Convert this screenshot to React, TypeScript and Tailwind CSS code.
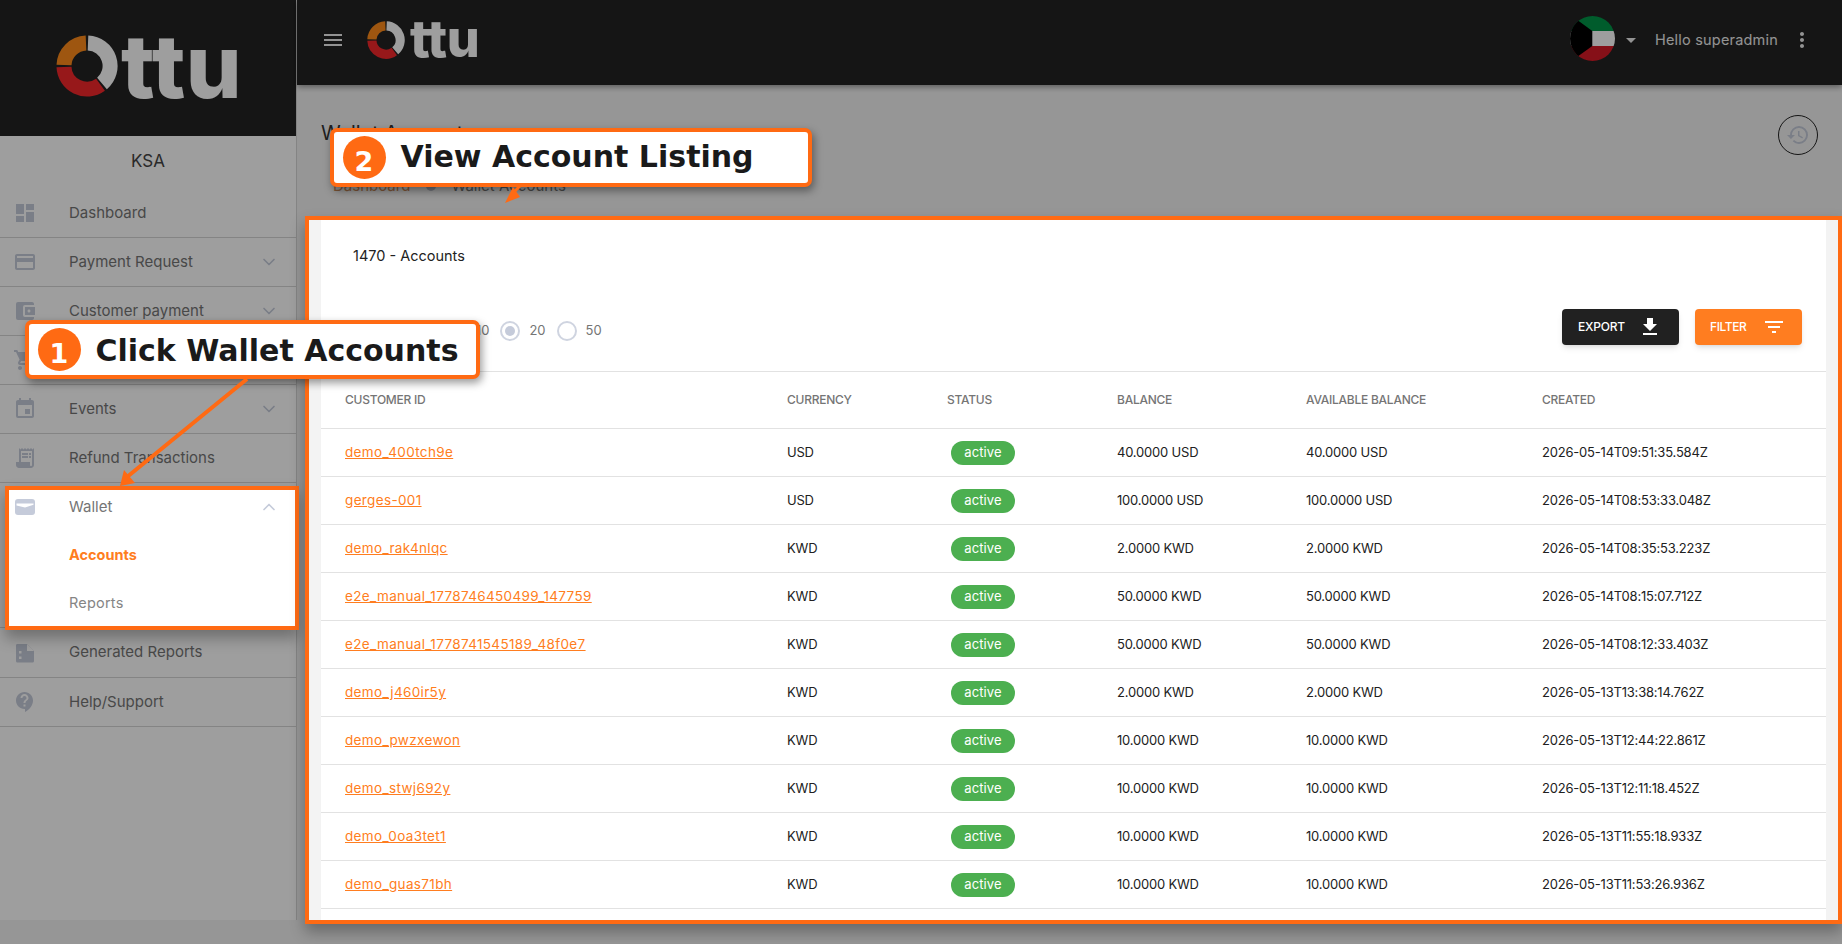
import React from 'react';
import { ChevronDown, ChevronUp } from 'lucide-react';
import {
  MdDashboard,
  MdCreditCard,
  MdAccountBalanceWallet,
  MdShoppingCart,
  MdEvent,
  MdReceiptLong,
  MdContactSupport,
  MdHistory,
  MdFileDownload,
  MdFilterList,
  MdMenu,
  MdMoreVert,
  MdArrowDropDown,
} from 'react-icons/md';

const accounts = [
  ['demo_400tch9e', 'USD', '40.0000 USD', '2026-05-14T09:51:35.584Z'],
  ['gerges-001', 'USD', '100.0000 USD', '2026-05-14T08:53:33.048Z'],
  ['demo_rak4nlqc', 'KWD', '2.0000 KWD', '2026-05-14T08:35:53.223Z'],
  ['e2e_manual_1778746450499_147759', 'KWD', '50.0000 KWD', '2026-05-14T08:15:07.712Z'],
  ['e2e_manual_1778741545189_48f0e7', 'KWD', '50.0000 KWD', '2026-05-14T08:12:33.403Z'],
  ['demo_j460ir5y', 'KWD', '2.0000 KWD', '2026-05-13T13:38:14.762Z'],
  ['demo_pwzxewon', 'KWD', '10.0000 KWD', '2026-05-13T12:44:22.861Z'],
  ['demo_stwj692y', 'KWD', '10.0000 KWD', '2026-05-13T12:11:18.452Z'],
  ['demo_0oa3tet1', 'KWD', '10.0000 KWD', '2026-05-13T11:55:18.933Z'],
  ['demo_guas71bh', 'KWD', '10.0000 KWD', '2026-05-13T11:53:26.936Z'],
];

function LogoRing({ className }: { className: string }) {
  return (
    <svg viewBox="0 0 62 62" className={className} fill="none" strokeWidth="15">
      <path d="M8 30 A23 23 0 0 1 30 8" stroke="#ff8c1a" />
      <path d="M32 8 A23 23 0 0 1 46 48.5" stroke="#ffffff" />
      <path d="M44.5 49.7 A23 23 0 0 1 8 32" stroke="#f4272b" />
    </svg>
  );
}

function WalletIcon() {
  return (
    <svg viewBox="0 0 24 24" className="w-6 h-6 shrink-0" fill="#c5cbda">
      <path d="M5 4h14a3 3 0 0 1 3 3v10a3 3 0 0 1-3 3H5a3 3 0 0 1-3-3V7a3 3 0 0 1 3-3z" />
      <path d="M3.5 8.5h17v1.2L12 12.5 3.5 10.6z" fill="#ffffff" />
    </svg>
  );
}

function ReportIcon() {
  return (
    <svg viewBox="0 0 24 24" className="w-6 h-6 shrink-0" fill="#c5cbda">
      <path d="M4 3h10l7 7v10a1.5 1.5 0 0 1-1.5 1.5h-15A1.5 1.5 0 0 1 3 20V4.500A1.500 1.500 0 0 1 4 3z" />
      <path d="M14 3v7h7z" fill="#ffffff" />
      <rect x="6" y="10" width="2.500" height="2.500" fill="#ffffff" />
      <rect x="6" y="15.500" width="2.500" height="2.500" fill="#ffffff" />
    </svg>
  );
}

function NavRow({ label, icon, chevron }: { label: string; icon: React.ReactNode; chevron?: boolean }) {
  return (
    <div className="h-[49px] border-b border-[#d6d6d6] flex items-center pl-[13px] pr-[17px]">
      {icon}
      <span className="ml-[32px] flex-1 text-[15px] text-[#757575]">{label}</span>
      {chevron && <ChevronDown className="w-5 h-5 text-[#c5cbda]" strokeWidth={2} />}
    </div>
  );
}

function Radio({ label, checked }: { label: string; checked?: boolean }) {
  return (
    <div className="flex items-center gap-[9px] mr-[11px]">
      <span className="w-5 h-5 rounded-full border-2 border-[#cfd4e0] flex items-center justify-center">
        {checked && <span className="w-[10px] h-[10px] rounded-full bg-[#c5cbda]" />}
      </span>
      <span className="text-[13px] text-[#757575]">{label}</span>
    </div>
  );
}

function Callout({ n, text, className, textClass }: { n: number; text: string; className: string; textClass: string }) {
  return (
    <div
      className={`absolute z-30 h-[59px] bg-white border-[4px] border-[#ff6a13] rounded-[7px] shadow-[2px_4px_8px_rgba(0,0,0,0.4)] flex items-center pl-[8.5px] ${className}`}
    >
      <span className="w-[43px] h-[43px] rounded-full bg-[#ff6a13] text-white text-[27px] font-bold flex items-center justify-center pt-[7px] leading-none">
        {n}
      </span>
      <span className={`ml-[15px] text-[30px] font-bold leading-none text-[#1a1a1a] whitespace-nowrap ${textClass}`}>
        {text}
      </span>
    </div>
  );
}

export default function App() {
  return (
    <div className="relative h-[944px] w-[1842px] overflow-hidden bg-[#f3f3f3] flex font-['Inter',sans-serif]">
      {/* Sidebar */}
      <aside className="w-[297px] h-[920px] shrink-0 bg-white border-r border-[#d6d6d6]">
        <div className="h-[136px] bg-[#232323] flex items-start pl-[56px] pt-[35px]">
          <LogoRing className="w-[62px] h-[62px]" />
          <span className="ml-[3px] -mt-[13px] text-[88px] leading-[88px] font-extrabold text-white tracking-[0.5px]">ttu</span>
        </div>
        <div className="h-[53px] pb-[2px] flex items-center justify-center text-[17px] text-[#444]">KSA</div>
        <NavRow label="Dashboard" icon={<MdDashboard className="w-6 h-6 text-[#c5cbda]" />} />
        <NavRow label="Payment Request" chevron icon={<MdCreditCard className="w-6 h-6 text-[#c5cbda]" />} />
        <NavRow label="Customer payment" chevron icon={<MdAccountBalanceWallet className="w-6 h-6 text-[#c5cbda]" />} />
        <NavRow label="Checkout" chevron icon={<MdShoppingCart className="w-6 h-6 text-[#c5cbda]" />} />
        <NavRow label="Events" chevron icon={<MdEvent className="w-6 h-6 text-[#c5cbda]" />} />
        <NavRow label="Refund Transactions" icon={<MdReceiptLong className="w-6 h-6 text-[#c5cbda]" />} />
        <div className="h-[145px] border-b border-[#d6d6d6] pl-[9px] pr-[1px] pt-[7px]">
          <div className="relative z-20 h-[136px] bg-white shadow-[0_0_0_4px_#ff6a13,0_8px_14px_4px_rgba(0,0,0,0.3)]">
            <div className="h-[41px] pb-[7px] pl-[4px] pr-[16px] flex items-center">
              <WalletIcon />
              <span className="ml-[32px] flex-1 text-[15px] text-[#757575]">Wallet</span>
              <ChevronUp className="w-5 h-5 text-[#c5cbda]" strokeWidth={2} />
            </div>
            <div className="h-[48px] pl-[60px] flex items-center text-[14.500px] font-bold text-[#ff7d20]">Accounts</div>
            <div className="h-[47px] pl-[60px] flex items-center text-[14.500px] tracking-[0.2px] text-[#858585]">Reports</div>
          </div>
        </div>
        <div className="h-[50px] border-b border-[#d6d6d6] flex items-center pl-[13px]">
          <ReportIcon />
          <span className="ml-[32px] text-[15px] text-[#757575]">Generated Reports</span>
        </div>
        <NavRow label="Help/Support" icon={<MdContactSupport className="w-6 h-6 text-[#c5cbda]" />} />
      </aside>

      {/* Main column */}
      <main className="flex-1 min-w-0 flex flex-col">
        <header className="relative h-[85px] pb-[6px] shrink-0 bg-[#232323] shadow-[0_2px_6px_rgba(0,0,0,0.4)] flex items-center text-white">
          <MdMenu className="ml-[24px] w-6 h-6 text-[#eee]" />
          <div className="ml-[22px] mt-[7px] flex items-start">
            <LogoRing className="w-[38px] h-[38px] -mt-[1px]" />
            <span className="ml-[5px] -mt-[9px] text-[52px] leading-[52px] font-extrabold text-white tracking-[-0.5px]">ttu</span>
          </div>
          <div className="ml-auto flex items-center">
            <svg viewBox="0 0 45 45" className="w-[45px] h-[45px] -mt-[3px]">
              <clipPath id="flag">
                <circle cx="22.500" cy="22.500" r="22.500" />
              </clipPath>
              <g clipPath="url(#flag)">
                <rect width="45" height="15" fill="#009548" />
                <rect y="15" width="45" height="15" fill="#fff" />
                <rect y="30" width="45" height="15" fill="#d81a27" />
                <polygon points="0,-1.400 22.300,15 22.300,30 0,46" fill="#000" />
              </g>
            </svg>
            <MdArrowDropDown className="ml-[4px] w-6 h-6 text-[#eee]" />
            <span className="ml-[12px] text-[14.500px] tracking-[0.2px] text-[#eee]">Hello superadmin</span>
            <MdMoreVert className="ml-[12px] mr-[28px] w-6 h-6 text-[#eee]" />
          </div>
        </header>

        <div className="pt-[30px] pl-[24px] pr-[24px] flex justify-between">
          <h1 className="text-[20px] leading-[36px] text-[#333]">Wallet Accounts</h1>
          <span className="w-10 h-10 rounded-full border border-[#222] flex items-center justify-center">
            <MdHistory className="w-6 h-6 text-[#c5cbda]" />
          </span>
        </div>
        <div className="mt-[20px] h-[22px] pl-[36px] flex items-center text-[15px]">
          <span className="text-[#c98a5a]">Dashboard</span>
          <span className="ml-[16px] w-[10px] h-[10px] rounded-full bg-[#b5b9c5]" />
          <span className="ml-[15px] text-[#757575]">Wallet Accounts</span>
        </div>

        {/* Highlighted listing */}
        <section className="relative z-20 mt-[23px] ml-[12px] mr-[4px] h-[700px] bg-[#f3f3f3] px-[12px] shadow-[0_0_0_4px_#ff6a13,0_8px_14px_4px_rgba(0,0,0,0.3)]">
          <div className="h-full bg-white overflow-hidden">
            <div className="h-[152px] border-b border-[#e2e2e2]">
              <div className="pl-[32px] pt-[26px] text-[14.500px] leading-[20px] text-[#222]">1470 - Accounts</div>
              <div className="mt-[43px] pl-[78px] pr-[24px] flex justify-between">
                <div className="flex items-center pt-2">
                  <Radio label="5" />
                  <Radio label="10" />
                  <Radio label="20" checked />
                  <Radio label="50" />
                </div>
                <div className="flex gap-4">
                  <button className="w-[117px] h-9 rounded bg-[#212121] text-white text-[12px] tracking-[-0.2px] font-medium shadow-md flex items-center justify-between pl-[16px] pr-[17px]">
                    EXPORT
                    <MdFileDownload className="w-6 h-6" />
                  </button>
                  <button className="w-[107px] h-9 rounded bg-[#ff7d20] text-white text-[12px] tracking-[-0.4px] font-medium shadow-md flex items-center justify-between pl-[15px] pr-[16px]">
                    FILTER
                    <MdFilterList className="w-6 h-6" />
                  </button>
                </div>
              </div>
            </div>
            <table className="w-full table-fixed border-separate border-spacing-0 text-left">
              <colgroup>
                <col className="w-[442px]" />
                <col className="w-[160px]" />
                <col className="w-[170px]" />
                <col className="w-[189px]" />
                <col className="w-[236px]" />
                <col />
              </colgroup>
              <thead>
                <tr className="h-[57px] text-[12px] tracking-[-0.25px] font-medium text-[#757575]">
                  {['CUSTOMER ID', 'CURRENCY', 'STATUS', 'BALANCE', 'AVAILABLE BALANCE', 'CREATED'].map((h) => (
                    <th key={h} className="pl-6 font-medium border-b border-[#e2e2e2]">{h}</th>
                  ))}
                </tr>
              </thead>
              <tbody className="text-[13px] tracking-[-0.2px] text-[#212121]">
                {accounts.map(([id, cur, bal, created]) => (
                  <tr key={id} className="h-[48px]">
                    <td className="pl-6 border-b border-[#e2e2e2]">
                      <a className="text-[13.500px] tracking-[0.35px] text-[#ff7d20] underline">{id}</a>
                    </td>
                    <td className="pl-6 border-b border-[#e2e2e2]">{cur}</td>
                    <td className="pl-6 border-b border-[#e2e2e2]">
                      <span className="ml-[4px] w-[64px] h-6 rounded-full bg-[#4caf50] text-white text-[13px] tracking-[0.1px] flex items-center justify-center">active</span>
                    </td>
                    <td className="pl-6 border-b border-[#e2e2e2]">{bal}</td>
                    <td className="pl-6 border-b border-[#e2e2e2]">{bal}</td>
                    <td className="pl-6 border-b border-[#e2e2e2]">{created}</td>
                  </tr>
                ))}
              </tbody>
            </table>
          </div>
        </section>
      </main>

      {/* Dim layer and annotations */}
      <div className="absolute inset-0 z-10 bg-black/[0.38]" />
      <Callout n={1} text="Click Wallet Accounts" textClass="pt-[2px]" className="left-[25px] top-[320px] w-[455px] font-['DejaVu_Sans',sans-serif]" />
      <Callout n={2} text="View Account Listing" textClass="pb-[1px]" className="left-[330px] top-[128px] w-[482px] font-['DejaVu_Sans',sans-serif]" />
      <svg className="absolute inset-0 z-30 w-[1842px] h-[944px] pointer-events-none" viewBox="0 0 1842 944">
        <line x1="247" y1="379" x2="127" y2="477" stroke="#ff6a13" strokeWidth="4" />
        <polygon points="120,486 124,470 135,483" fill="#ff6a13" />
        <line x1="520" y1="186" x2="512" y2="194" stroke="#ff6a13" strokeWidth="3" />
        <polygon points="505,203 513,187 520,197" fill="#ff6a13" />
      </svg>
    </div>
  );
}
